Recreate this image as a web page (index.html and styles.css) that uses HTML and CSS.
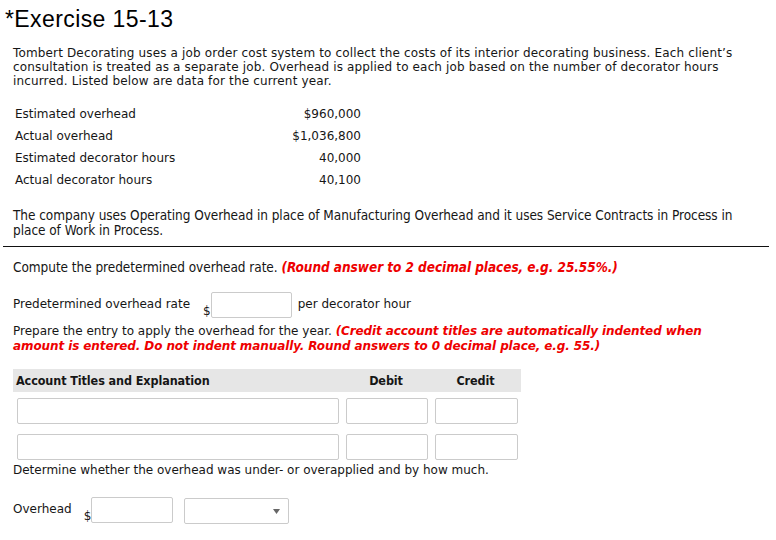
FILE: index.html
```html
<!DOCTYPE html>
<html>
<head>
<meta charset="utf-8">
<link rel="stylesheet" href="styles.css">
</head>
<body>
<h1 class="title">*Exercise 15-13</h1>
<p class="intro">Tombert Decorating uses a job order cost system to collect the costs of its interior decorating business. Each client’s consultation is treated as a separate job. Overhead is applied to each job based on the number of decorator hours incurred. Listed below are data for the current year.</p>
<table class="data">
  <tr><td class="lbl">Estimated overhead</td><td class="val">$960,000</td></tr>
  <tr><td class="lbl">Actual overhead</td><td class="val">$1,036,800</td></tr>
  <tr><td class="lbl">Estimated decorator hours</td><td class="val">40,000</td></tr>
  <tr><td class="lbl">Actual decorator hours</td><td class="val">40,100</td></tr>
</table>
<p class="cond">The company uses Operating Overhead in place of Manufacturing Overhead and it uses Service Contracts in Process in place of Work in Process.</p>
<hr class="rule">
<p class="cond q1">Compute the predetermined overhead rate. <em class="red">(Round answer to 2 decimal places, e.g. 25.55%.)</em></p>
<div class="rate">
  <span class="rlabel">Predetermined overhead rate</span>
  <span class="dollar">$</span>
  <span class="box rbox"></span>
  <span class="rlabel">per decorator hour</span>
</div>
<p class="text q2">Prepare the entry to apply the overhead for the year. <em class="red red2">(Credit account titles are automatically indented when amount is entered. Do not indent manually. Round answers to 0 decimal place, e.g. 55.)</em></p>
<div class="journal">
  <div class="jhead">
    <span class="h-acc">Account Titles and Explanation</span>
    <span class="h-deb">Debit</span>
    <span class="h-cre">Credit</span>
  </div>
  <div class="jrow">
    <span class="box acc"></span><span class="box deb"></span><span class="box cre"></span>
  </div>
  <div class="jrow">
    <span class="box acc"></span><span class="box deb"></span><span class="box cre"></span>
  </div>
</div>
<p class="text q3">Determine whether the overhead was under- or overapplied and by how much.</p>
<div class="ovh">
  <span class="rlabel">Overhead</span>
  <span class="dollar">$</span>
  <span class="box obox"></span>
  <span class="box sel"><svg width="7" height="5" viewBox="0 0 7 5"><path d="M0 0H7L3.5 5Z" fill="#666"/></svg></span>
</div>
</body>
</html>
```
FILE: styles.css
```css
body {
  margin: 0;
  background: #fff;
  color: #161616;
  font-family: "DejaVu Sans", Verdana, sans-serif;
  font-size: 12px;
}
.title {
  font-family: "Liberation Sans", Arial, sans-serif;
  font-weight: normal;
  font-size: 23px;
  letter-spacing: 0.4px;
  margin: 6px 0 0 5px;
  line-height: 26px;
  color: #000;
}
.intro {
  margin: 14px 0 0 13px;
  width: 720px;
  line-height: 14px;
  letter-spacing: 0.15px;
}
.data {
  margin: 15px 0 0 13px;
  border-collapse: collapse;
}
.data td {
  height: 22px;
  padding: 0 2px;
}
.data .lbl { width: 250px; }
.data .val { width: 92px; text-align: right; }
.cond {
  margin: 17px 0 0 13px;
  width: 740px;
  line-height: 15px;
  font-family: "DejaVu Sans Condensed", "DejaVu Sans", sans-serif;
  font-stretch: condensed;
  font-size: 13.5px;
  letter-spacing: -0.05px;
}
.rule {
  margin: 8px 7px 0 3px;
  border: 0;
  border-top: 1px solid #111;
  height: 0;
}
.q1 { margin-top: 13px; }
.red {
  color: #ee0000;
  font-weight: bold;
  font-style: italic;
}
.rate, .ovh {
  display: flex;
  align-items: flex-start;
  margin-left: 13px;
}
.rate { margin-top: 17px; }
.rlabel { padding-top: 5px; line-height: 15px; }
.dollar { padding-top: 13px; margin-left: 13px; line-height: 13px; }
.box {
  display: block;
  box-sizing: border-box;
  height: 26px;
  border: 1px solid #cbcbcb;
  border-radius: 2px;
  background: #fff;
}
.rbox { width: 81px; margin-right: 6px; }
.text {
  margin: 0 0 0 13px;
  line-height: 15px;
}
.q2 { margin-top: 6px; width: 720px; }
.red2 { letter-spacing: -0.1px; }
.journal {
  margin: 15px 0 0 13px;
  width: 508px;
}
.jhead {
  display: flex;
  gap: 7px;
  height: 23px;
  padding-left: 4px;
  align-items: center;
  background: #e6e6e6;
  font-family: "DejaVu Sans Condensed", "DejaVu Sans", sans-serif;
  font-stretch: condensed;
  font-weight: bold;
  font-size: 12.5px;
  letter-spacing: -0.1px;
}
.h-acc { width: 322px; margin-left: -1px; }
.h-deb { width: 82px; text-align: center; }
.h-cre { width: 83px; text-align: center; }
.jrow {
  display: flex;
  gap: 7px;
  margin-top: 6px;
  padding-left: 4px;
}
.jrow + .jrow { margin-top: 10px; }
.acc { width: 322px; }
.deb { width: 82px; }
.cre { width: 83px; }
.q3 { margin-top: 3px; }
.ovh { margin-top: 19px; }
.ovh .dollar { margin-left: 12px; }
.obox { width: 82px; margin-right: 11px; }
.sel {
  width: 105px;
  margin-top: 1px;
  display: flex;
  align-items: center;
  justify-content: flex-end;
  padding-right: 8px;
}
```
